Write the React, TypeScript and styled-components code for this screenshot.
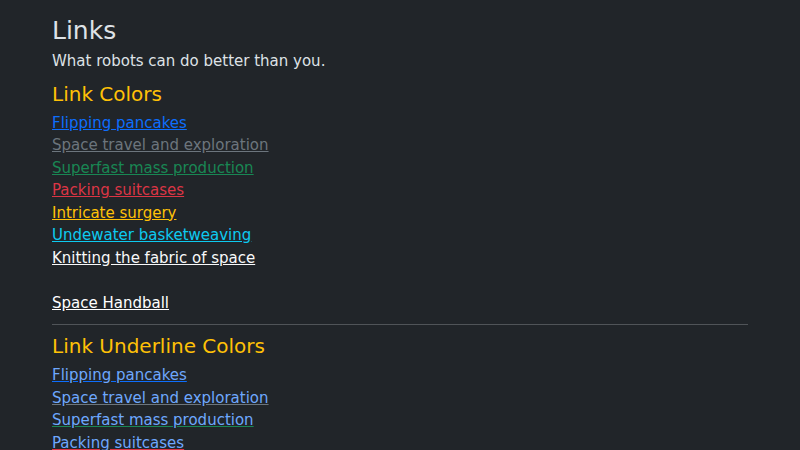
import React from 'react';
import styled, { createGlobalStyle } from 'styled-components';

const GlobalStyle = createGlobalStyle`
  * { box-sizing: border-box; }
  body {
    margin: 0;
    background-color: #212529;
    color: #dee2e6;
    font-family: "DejaVu Sans", "Noto Sans", sans-serif;
    font-size: 15px;
    line-height: 1.5;
  }
`;

const Container = styled.div`
  width: 696px;
  margin: 0 auto;
  padding-top: 16px;
`;

const Title = styled.h1`
  margin: 0 0 4px;
  font-size: 25px;
  font-weight: 400;
  line-height: 1.2;
  color: #dee2e6;
`;

const Lead = styled.p`
  margin: 0 0 9px;
`;

const SectionTitle = styled.h4`
  margin: 0 0 6px;
  font-size: 20px;
  font-weight: 400;
  line-height: 1.2;
  color: #ffc107;
`;

const LinkList = styled.div`
  display: flex;
  flex-direction: column;
  align-items: flex-start;
`;

const ColorLink = styled.a<{ $color: string; $line?: string }>`
  color: ${p => p.$color};
  text-decoration: underline;
  text-decoration-color: ${p => p.$line || p.$color};
  cursor: pointer;
`;

const Spacer = styled.div`
  height: 22.5px;
`;

const Divider = styled.hr`
  margin: 10px 0 9px;
  border: 0;
  border-top: 1px solid #dee2e6;
  opacity: 0.25;
`;

const colorLinks = [
  { text: 'Flipping pancakes', color: '#0d6efd' },
  { text: 'Space travel and exploration', color: '#6c757d' },
  { text: 'Superfast mass production', color: '#198754' },
  { text: 'Packing suitcases', color: '#dc3545' },
  { text: 'Intricate surgery', color: '#ffc107' },
  { text: 'Undewater basketweaving', color: '#0dcaf0' },
  { text: 'Knitting the fabric of space', color: '#f8f9fa' },
];

const underlineLinks = [
  { text: 'Flipping pancakes', line: '#0d6efd' },
  { text: 'Space travel and exploration', line: '#6c757d' },
  { text: 'Superfast mass production', line: '#198754' },
  { text: 'Packing suitcases', line: '#dc3545' },
  { text: 'Intricate surgery', line: '#ffc107' },
  { text: 'Undewater basketweaving', line: '#0dcaf0' },
  { text: 'Knitting the fabric of space', line: '#f8f9fa' },
];

const App = () => {
  return (
    <>
      <GlobalStyle />
      <Container>
        <Title>Links</Title>
        <Lead>What robots can do better than you.</Lead>

        <SectionTitle>Link Colors</SectionTitle>
        <LinkList>
          {colorLinks.map(l => (
            <ColorLink key={l.text} $color={l.color}>{l.text}</ColorLink>
          ))}
          <Spacer />
          <ColorLink $color="#ffffff">Space Handball</ColorLink>
        </LinkList>

        <Divider />

        <SectionTitle>Link Underline Colors</SectionTitle>
        <LinkList>
          {underlineLinks.map(l => (
            <ColorLink key={l.text} $color="#6ea8fe" $line={l.line}>{l.text}</ColorLink>
          ))}
        </LinkList>
      </Container>
    </>
  );
};

export default App;
